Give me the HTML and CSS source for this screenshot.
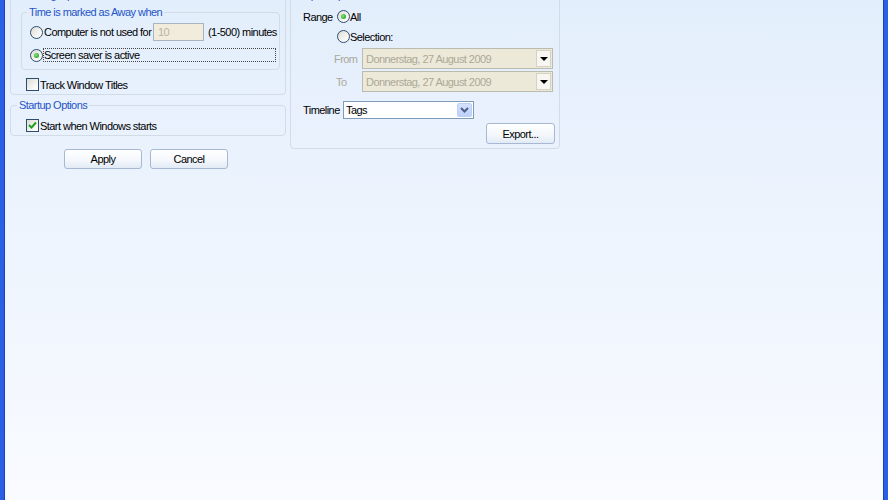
FILE: index.html
```html
<!DOCTYPE html>
<html lang="en">
  <head>
    <meta charset="UTF-8" />
    <meta name="viewport" content="width=device-width, initial-scale=1.0" />
    <title>Options</title>
    <link rel="stylesheet" href="styles.css">
  </head>
  <body>
    <div class="window">
      <div class="column column-left">
        <fieldset class="group group-tracking">
          <legend>Tracking Options</legend>
          <div class="group-body">
            <fieldset class="group group-away">
              <legend>Time is marked as Away when</legend>
              <div class="group-body">
                <div class="option option-idle">
                  <span class="radio"></span>
                  <span class="idle-text">Computer is not used for</span>
                  <span class="textbox">10</span>
                  <span class="unit-text">(1-500) minutes</span>
                </div>
                <div class="option option-saver">
                  <span class="radio checked"></span>
                  <span class="focus-text">Screen saver is active</span>
                </div>
              </div>
            </fieldset>
            <div class="check-row check-titles">
              <span class="checkbox"></span>
              <span>Track Window Titles</span>
            </div>
          </div>
        </fieldset>

        <fieldset class="group group-startup">
          <legend>Startup Options</legend>
          <div class="group-body">
            <div class="check-row">
              <span class="checkbox checked">
                <svg width="11" height="11" viewBox="0 0 11 11"><polyline points="2,5 4.5,7.5 9,2.5" fill="none" stroke="#21a121" stroke-width="2"/></svg>
              </span>
              <span>Start when Windows starts</span>
            </div>
          </div>
        </fieldset>

        <div class="buttons">
          <button class="button">Apply</button>
          <button class="button">Cancel</button>
        </div>
      </div>

      <div class="column column-right">
        <fieldset class="group group-export">
          <legend>Export Options</legend>
          <div class="group-body">
            <div class="range-row">
              <span class="row-label range-label">Range</span>
              <span class="radio checked"></span>
              <span>All</span>
            </div>
            <div class="range-row selection-row">
              <span class="radio"></span>
              <span>Selection:</span>
            </div>
            <div class="date-row">
              <span class="date-label date-from">From</span>
              <div class="combo combo-disabled">
                <span class="combo-text">Donnerstag, 27 August 2009</span>
                <span class="date-button"></span>
              </div>
            </div>
            <div class="date-row date-row-to">
              <span class="date-label date-to">To</span>
              <div class="combo combo-disabled">
                <span class="combo-text">Donnerstag, 27 August 2009</span>
                <span class="date-button"></span>
              </div>
            </div>
            <div class="timeline-row">
              <span class="row-label timeline-label">Timeline</span>
              <div class="combo combo-timeline">
                <span class="combo-text">Tags</span>
                <span class="drop-button">
                  <svg width="9" height="6" viewBox="0 0 9 6"><polyline points="1,1 4.5,4.5 8,1" fill="none" stroke="#4d6185" stroke-width="2"/></svg>
                </span>
              </div>
            </div>
            <div class="export-row">
              <button class="button button-export">Export...</button>
            </div>
          </div>
        </fieldset>
      </div>
    </div>
  </body>
</html>
```

FILE: styles.css
```css
*,
*::after,
*::before {
  box-sizing: border-box;
}

body {
  margin: 0;
  height: 500px;
  overflow: hidden;
  font-family: "Liberation Sans", Arial, sans-serif;
  font-size: 11px;
  letter-spacing: -0.55px;
  white-space: nowrap;
  color: #000;
  background: linear-gradient(to bottom, #e3eefc 0%, #f9fbff 100%);
  border-left: 4px solid #2b5fe4;
  border-right: 4px solid #2b5fe4;
  box-shadow: inset 1px 0 0 #1941c8, inset -1px 0 0 #1941c8;
}

.window {
  display: flex;
  gap: 4px;
  align-items: flex-start;
  margin-top: -11px; /* the top of the dialog lies above the picture */
  padding-left: 6px;
}

.column {
  display: flex;
  flex-direction: column;
}

/* group boxes */
.group {
  margin: 0;
  padding: 0;
  border: 1px solid #d2dce6;
  border-radius: 4px;
  min-width: 0;
}

.group legend {
  margin-left: 6px;
  padding: 0 2px;
  line-height: 12px;
  color: #1e55c6;
}

.group-tracking {
  width: 276px;
}

.group-tracking > .group-body {
  padding: 5px 5px 3px 10px;
}

.group-away legend {
  margin-left: 5px;
}

.group-away > .group-body {
  padding: 5px 3px 7px 8px;
}

.group-startup {
  width: 276px;
  margin-top: 4px;
}

.group-startup > .group-body {
  padding: 8px 5px 3px 15px;
}

.group-export {
  width: 270px;
}

.group-export > .group-body {
  padding: 9px 4px 4px 12px;
  display: flex;
  flex-direction: column;
}

/* radio buttons and check boxes */
.option {
  display: flex;
  align-items: center;
}

.option-idle {
  height: 18px;
}

.option-saver {
  height: 14px;
  margin-top: 7px;
}

.radio {
  position: relative;
  flex: none;
  width: 13px;
  height: 13px;
  border: 1px solid #2c4c70;
  border-radius: 50%;
  background: linear-gradient(135deg, #dcdcd6 0%, #f4f4f0 60%, #ffffff 100%);
}

.radio.checked::after {
  content: "";
  position: absolute;
  left: 3px;
  top: 3px;
  width: 5px;
  height: 5px;
  border-radius: 50%;
  background: radial-gradient(circle at 40% 40%, #8fe48c 0%, #3fba3c 50%, #1f961d 100%);
}

.idle-text {
  flex: none;
  width: 110px;
  padding-left: 1px;
}

.textbox {
  flex: none;
  width: 51px;
  height: 18px;
  line-height: 16px;
  padding-left: 4px;
  border: 1px solid #a9b4c2;
  background: #f2ecdc;
  color: #b9b3a3;
}

.unit-text {
  flex: none;
  margin-left: 4px;
}

.focus-text {
  flex: 1;
  height: 14px;
  line-height: 12px;
  border: 1px dotted #444;
}

.check-row {
  display: flex;
  align-items: center;
  height: 13px;
}

.check-titles {
  margin-top: 8px;
  margin-left: 5px;
}

.checkbox {
  flex: none;
  display: flex;
  align-items: center;
  justify-content: center;
  width: 13px;
  height: 13px;
  margin-right: 1px;
  border: 1px solid #2c4c70;
  background: linear-gradient(135deg, #dcdcd6 0%, #f4f4f0 60%, #ffffff 100%);
}

/* buttons */
.buttons {
  display: flex;
  gap: 8px;
  margin-top: 13px;
  padding-left: 54px;
}

.button {
  width: 78px;
  height: 20px;
  padding: 0;
  font: inherit;
  letter-spacing: inherit;
  color: #000;
  border: 1px solid #a7b9d2;
  border-radius: 3px;
  background: linear-gradient(to bottom, #ffffff 0%, #f3f7fc 60%, #e2eaf5 100%);
}

.button-export {
  width: 69px;
  height: 21px;
}

/* export options */
.range-row {
  display: flex;
  align-items: center;
  height: 13px;
}

.range-label {
  width: 34px;
}

.selection-row {
  margin-top: 7px;
  margin-left: 34px;
}

.date-row {
  display: flex;
  align-items: center;
  height: 21px;
  margin-top: 5px;
}

.date-row-to {
  margin-top: 2px;
}

.date-label {
  color: #aca899;
}

.date-from {
  width: 28px;
  margin-left: 31px;
}

.date-to {
  width: 26px;
  margin-left: 33px;
}

.combo {
  display: flex;
  align-items: center;
  justify-content: space-between;
}

.combo-disabled {
  width: 191px;
  height: 21px;
  padding: 0 1px 0 3px;
  border: 1px solid #b9bcaf;
  background: #ece9d8;
  color: #aca899;
}

.date-button {
  position: relative;
  width: 15px;
  height: 17px;
  border: 1px solid #d4d2c4;
  background: #f7f6f1;
}

.date-button::after {
  content: "";
  position: absolute;
  left: 3px;
  top: 6px;
  border-left: 4px solid transparent;
  border-right: 4px solid transparent;
  border-top: 4px solid #000;
}

.timeline-row {
  display: flex;
  align-items: center;
  height: 18px;
  margin-top: 9px;
}

.timeline-label {
  width: 40px;
}

.combo-timeline {
  width: 131px;
  height: 18px;
  padding: 0 1px 0 2px;
  border: 1px solid #7f9db9;
  background: #fff;
}

.drop-button {
  display: flex;
  align-items: center;
  justify-content: center;
  width: 15px;
  height: 14px;
  border: 1px solid #bccefa;
  border-radius: 2px;
  background: linear-gradient(to bottom, #d5e1fd 0%, #bcd0f9 100%);
}

.export-row {
  display: flex;
  justify-content: flex-end;
  margin-top: 4px;
}
```
